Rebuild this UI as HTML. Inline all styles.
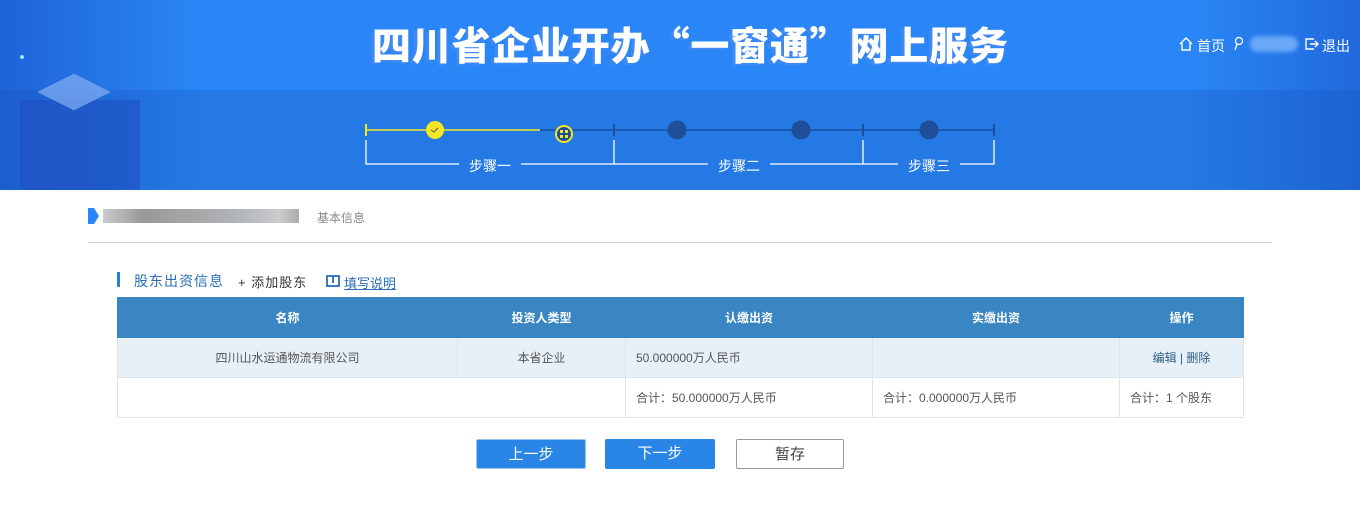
<!DOCTYPE html>
<html><head><meta charset="utf-8"><style>
*{margin:0;padding:0;box-sizing:border-box}
body{width:1360px;height:519px;background:#fff;font-family:"Liberation Sans","Noto Sans CJK SC",sans-serif;position:relative;overflow:hidden}
.abs{position:absolute}
.top{left:0;top:0;width:1360px;height:90px;background:#2a86f6}
.bot{left:0;top:90px;width:1360px;height:100px;background:#2479e4}
.title{left:372px;top:16px;font-size:39px;font-weight:900;color:#fff;white-space:nowrap;letter-spacing:0.8px;font-family:"Noto Sans CJK SC",sans-serif;text-shadow:-3px 2px 0 rgba(80,140,240,.6)}
.nav{top:36px;color:#fff;font-size:14px}
.step{color:#fff;font-size:14px;top:156px;background:#2479e4;padding:0 10px}
td,th{border:1px solid #dde3ea;font-size:12px;color:#555;height:40px}
th{background:#3a86c2;color:#fff;font-weight:bold;border-color:#3a86c2}
.btn{top:439px;height:30px;width:110px;font-size:15px;text-align:center;line-height:29px;border-radius:2px}
</style></head><body>
<div class="abs top"></div>
<div class="abs bot"></div>
<div class="abs" style="left:0;top:0;width:200px;height:190px;background:linear-gradient(90deg,rgba(20,70,190,.55),rgba(20,70,190,0))"></div>
<div class="abs" style="left:20px;top:100px;width:120px;height:90px;background:#1f4fc0;opacity:.6"></div>
<div class="abs" style="left:48px;top:66px;width:52px;height:52px;background:#7fa9ef;transform:scaleY(.5) rotate(45deg);opacity:.75"></div>
<div class="abs" style="left:20px;top:55px;width:4px;height:4px;border-radius:50%;background:#8ef"></div>
<div class="abs" style="left:1190px;top:0;width:170px;height:190px;background:linear-gradient(270deg,rgba(20,70,190,.45),rgba(20,70,190,0))"></div>
<div class="abs title">四川省企业开办“一窗通”网上服务</div>
<svg class="abs" style="left:1178px;top:36px" width="16" height="16" viewBox="0 0 16 16"><path d="M2 8 L8 2 L14 8 M4 7 V14 H12 V7" fill="none" stroke="#fff" stroke-width="1.4"/></svg>
<div class="abs nav" style="left:1197px">首页</div>
<svg class="abs" style="left:1233px;top:36px" width="12" height="16" viewBox="0 0 12 16"><circle cx="6" cy="5" r="3.5" fill="none" stroke="#fff" stroke-width="1.3"/><path d="M4 8 L2 14" stroke="#fff" stroke-width="1.3"/></svg>
<div class="abs" style="left:1250px;top:36px;width:48px;height:16px;background:#6aa8f8;border-radius:8px;filter:blur(2px)"></div>
<svg class="abs" style="left:1304px;top:36px" width="16" height="16" viewBox="0 0 16 16"><path d="M10 3 H2 V13 H10 M6 8 H14 M11 5 L14 8 L11 11" fill="none" stroke="#fff" stroke-width="1.4"/></svg>
<div class="abs nav" style="left:1322px">退出</div>
<svg class="abs" style="left:360px;top:115px" width="640" height="60">
<line x1="6" y1="15" x2="180" y2="15" stroke="#f5e625" stroke-width="1.5"/>
<line x1="180" y1="15" x2="634" y2="15" stroke="#1a4f9e" stroke-width="1.5"/>
<line x1="6" y1="9" x2="6" y2="21" stroke="#f5e625" stroke-width="2"/>
<line x1="254" y1="9" x2="254" y2="21" stroke="#1a4f9e" stroke-width="2"/>
<line x1="503" y1="9" x2="503" y2="21" stroke="#1a4f9e" stroke-width="2"/>
<line x1="634" y1="9" x2="634" y2="21" stroke="#1a4f9e" stroke-width="2"/>
<circle cx="75" cy="15" r="9" fill="#f5e625"/><path d="M71 15 l3 2 l4 -4" stroke="#555" fill="none" stroke-width="1"/>
<circle cx="204" cy="19" r="8" fill="#1a4f9e" stroke="#f5e625" stroke-width="2"/>
<rect x="200" y="15" width="3" height="3" fill="#f5e625"/><rect x="205" y="15" width="3" height="3" fill="#f5e625"/><rect x="200" y="20" width="3" height="3" fill="#f5e625"/><rect x="205" y="20" width="3" height="3" fill="#f5e625"/>
<circle cx="317" cy="15" r="9.5" fill="#1e4f98"/>
<circle cx="441" cy="15" r="9.5" fill="#1e4f98"/>
<circle cx="569" cy="15" r="9.5" fill="#1e4f98"/>
<path d="M6 25 V49 H634 V25 M254 25 V49 M503 25 V49" fill="none" stroke="#fff" stroke-width="1.3"/>
</svg>
<div class="abs step" style="left:459px">步骤一</div>
<div class="abs step" style="left:708px">步骤二</div>
<div class="abs step" style="left:898px">步骤三</div>
<svg class="abs" style="left:88px;top:208px" width="12" height="16"><path d="M0 0 H6 L11 8 L6 16 H0 Z" fill="#2a86f6"/></svg>
<div class="abs" style="left:103px;top:209px;width:196px;height:14px;background:linear-gradient(90deg,#ccc,#999 20%,#a8a8a8 50%,#b0b6bb 70%,#ccc 90%,#aaa)"></div>
<div class="abs" style="left:317px;top:209px;font-size:12px;color:#888">基本信息</div>
<div class="abs" style="left:88px;top:242px;width:1184px;height:1px;background:#ccc"></div>
<div class="abs" style="left:117px;top:272px;width:3px;height:15px;background:#2a7fd6"></div>
<div class="abs" style="left:134px;top:271px;font-size:14px;color:#2a6eb8;letter-spacing:1px">股东出资信息</div>
<div class="abs" style="left:238px;top:272px;font-size:13px;color:#333;letter-spacing:1px">+ 添加股东</div>
<svg class="abs" style="left:326px;top:275px" width="14" height="13"><rect x="1" y="1" width="12" height="10" fill="none" stroke="#2a6eb8" stroke-width="1.8"/><line x1="7" y1="1" x2="7" y2="8" stroke="#2a6eb8" stroke-width="1.8"/></svg>
<div class="abs" style="left:344px;top:273px;font-size:13px;color:#2a6eb8;text-decoration:underline">填写说明</div>
<table class="abs" style="left:117px;top:297px;width:1127px;border-collapse:collapse">
<tr><th style="width:340px">名称</th><th style="width:168px">投资人类型</th><th style="width:247px">认缴出资</th><th style="width:247px">实缴出资</th><th>操作</th></tr>
<tr style="background:#e8f0f7"><td style="text-align:center">四川山水运通物流有限公司</td><td style="text-align:center">本省企业</td><td style="padding-left:10px">50.000000万人民币</td><td></td><td style="text-align:center;color:#2a5f8a">编辑 | 删除</td></tr>
<tr><td colspan="2"></td><td style="padding-left:10px">合计：50.000000万人民币</td><td style="padding-left:10px">合计：0.000000万人民币</td><td style="padding-left:10px">合计：1 个股东</td></tr>
</table>
<div class="abs btn" style="left:476px;background:#2a86e6;color:#fff;border:1px solid #9ec3f0;line-height:30px">上一步</div>
<div class="abs btn" style="left:605px;background:#2a86e6;color:#fff;line-height:30px">下一步</div>
<div class="abs btn" style="left:736px;width:108px;background:#fff;color:#444;border:1px solid #999">暂存</div>
</body></html>
